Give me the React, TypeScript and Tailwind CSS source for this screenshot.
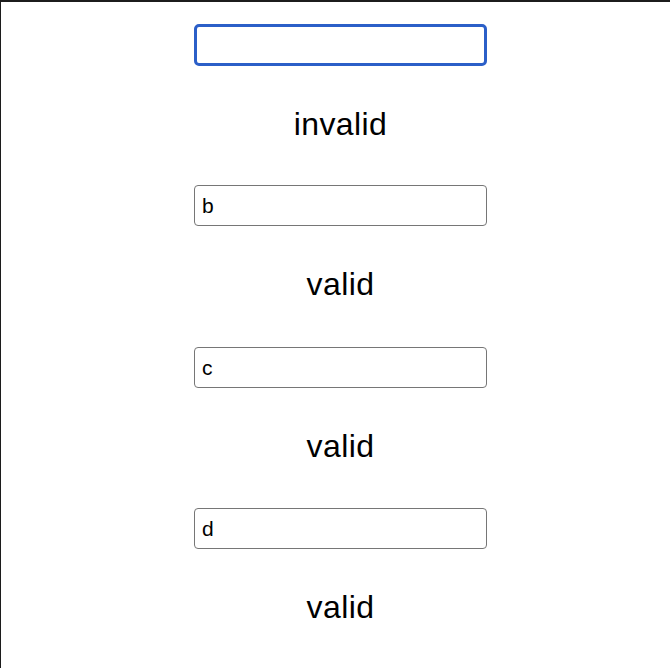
// Four text inputs, each followed by a validity label.
// The first one is empty, focused and reads "invalid".
const FIELDS = [
  { value: '', focused: true, gap: '' },
  { value: 'b', focused: false, gap: 'mt-[45px]' },
  { value: 'c', focused: false, gap: 'mt-[47px]' },
  { value: 'd', focused: false, gap: 'mt-[46px]' },
]

export default function App() {
  return (
    <div className="w-[670px] h-[668px] overflow-hidden bg-white border-t-2 border-l border-[#1c1c1c] flex flex-col items-center pt-[22px] pl-[10px] font-['Liberation_Sans',Arial,sans-serif] text-black">
      {FIELDS.map((f) => (
        <div key={f.value || 'empty'} className={`flex flex-col items-center ${f.gap}`}>
          <input
            readOnly
            value={f.value}
            className={
              f.focused
                ? 'w-[293px] h-[42px] rounded-[5px] border-[3px] border-[#2b5fc8] px-[6px] text-[21px] outline-none bg-white'
                : 'w-[293px] h-[41px] rounded-[4px] border border-[#767676] px-[7px] text-[21px] outline-none bg-white'
            }
          />
          <p className="mt-[42px] h-[32px] text-[32px] leading-[32px] tracking-[0.4px]">
            {f.value === '' ? 'invalid' : 'valid'}
          </p>
        </div>
      ))}
    </div>
  )
}
